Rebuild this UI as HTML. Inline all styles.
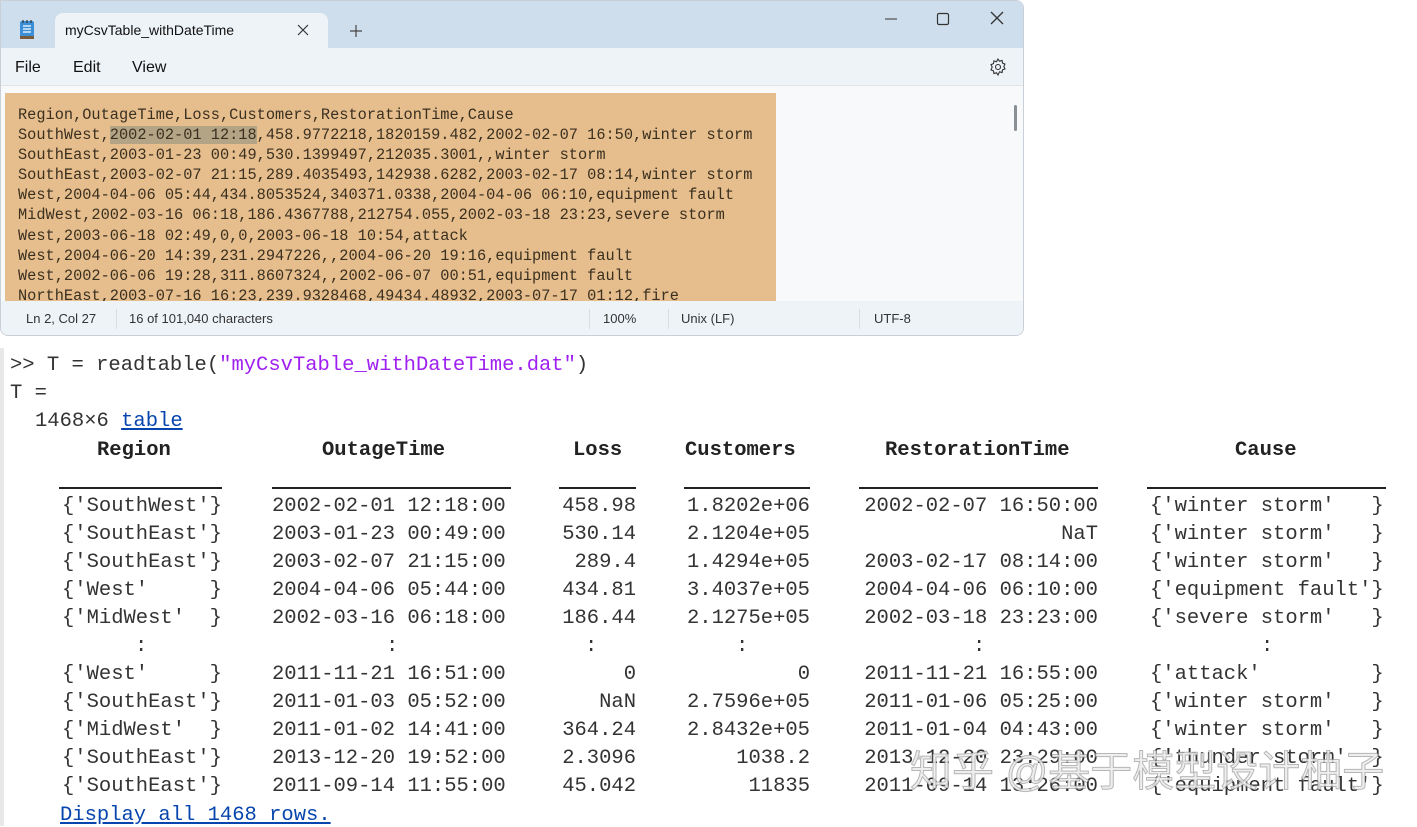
<!DOCTYPE html>
<html><head><meta charset="utf-8">
<style>
*{margin:0;padding:0;box-sizing:border-box}
body{width:1417px;height:826px;background:#fff;position:relative;overflow:hidden;font-family:"Liberation Sans",sans-serif}
.a{position:absolute;white-space:pre}
#win{position:absolute;left:0;top:0;width:1024px;height:336px;border:1px solid #c9cfd6;border-radius:0 8px 8px 8px;overflow:hidden;background:#f7f9fb}
#title{position:absolute;left:0;top:0;width:100%;height:47px;background:#cfdeec}
#tab{position:absolute;left:54px;top:12px;width:273px;height:36px;background:#eef3f8;border-radius:8px 8px 0 0}
#menu{position:absolute;left:0;top:47px;width:100%;height:38px;background:#eef3f8;border-bottom:1px solid #e0e5ea}
#sel{position:absolute;left:4px;top:92px;width:771px;height:215px;background:#e6bd8c;overflow:hidden}
#sel div{font-family:"Liberation Mono",monospace;font-size:15.3px;line-height:20.1px;color:#3a3020;white-space:pre;padding-left:13px;padding-top:12px}
.hl{background:#b3a485}
#status{position:absolute;left:0;top:300px;width:100%;height:36px;background:#eef3f8;font-size:13px;color:#333}
.sep{position:absolute;top:8px;width:1px;height:20px;background:#d9dde2}
.m{font-family:"Liberation Mono","Courier New",monospace;font-size:20.5px;color:#333}
.r{text-align:right}
.h{font-weight:bold;color:#222}
.ln{position:absolute;top:487px;height:1.5px;background:#222}
</style></head><body>
<div id="win">
 <div id="title"></div>
 <div id="tab"></div>
 <svg class="a" style="left:17px;top:18px" width="18" height="22" viewBox="0 0 18 22"><rect x="2" y="2" width="14" height="18" rx="2" fill="#3b8fd6"/><rect x="2" y="17" width="14" height="3" fill="#7a5a3a"/><path d="M5 7h8M5 10h8M5 13h8" stroke="#fff" stroke-width="1.3"/><path d="M5 1v3M9 1v3M13 1v3" stroke="#333" stroke-width="1.2"/></svg>
 <div class="a" style="left:64px;top:21px;font-size:14px;color:#111">myCsvTable_withDateTime</div>
 <svg class="a" style="left:296px;top:23px" width="12" height="12"><path d="M1 1L11 11M11 1L1 11" stroke="#333" stroke-width="1.2"/></svg>
 <svg class="a" style="left:348px;top:23px" width="14" height="14"><path d="M7 1V13M1 7H13" stroke="#444" stroke-width="1.2"/></svg>
 <svg class="a" style="left:884px;top:17px" width="12" height="2"><path d="M0 1H12" stroke="#333"/></svg>
 <svg class="a" style="left:935px;top:11px" width="14" height="14"><rect x="1.5" y="1.5" width="11" height="11" rx="1.5" fill="none" stroke="#333" stroke-width="1.2"/></svg>
 <svg class="a" style="left:989px;top:10px" width="14" height="14"><path d="M1 1L13 13M13 1L1 13" stroke="#333" stroke-width="1.3"/></svg>
 <div id="menu"></div>
 <div class="a" style="left:14px;top:58px;font-size:16px;color:#111">File</div>
 <div class="a" style="left:72px;top:58px;font-size:16px;color:#111">Edit</div>
 <div class="a" style="left:131px;top:58px;font-size:16px;color:#111">View</div>
 <svg class="a" style="left:987px;top:56px" width="20" height="20" viewBox="0 0 20 20"><path d="M10 2l1.5 2.2 2.6-.7.4 2.6 2.5 1-1.2 2.4 1.2 2.4-2.5 1-.4 2.6-2.6-.7L10 18l-1.5-2.2-2.6.7-.4-2.6-2.5-1L4.2 10 3 7.6l2.5-1 .4-2.6 2.6.7z" fill="none" stroke="#333" stroke-width="1.1"/><circle cx="10" cy="10" r="2.5" fill="none" stroke="#333" stroke-width="1.1"/></svg>
 <div class="a" style="left:1013px;top:104px;width:3px;height:26px;background:#8a8f94;border-radius:2px"></div>
 <div id="sel"><div>Region,OutageTime,Loss,Customers,RestorationTime,Cause
SouthWest,<span class="hl">2002-02-01 12:18</span>,458.9772218,1820159.482,2002-02-07 16:50,winter storm
SouthEast,2003-01-23 00:49,530.1399497,212035.3001,,winter storm
SouthEast,2003-02-07 21:15,289.4035493,142938.6282,2003-02-17 08:14,winter storm
West,2004-04-06 05:44,434.8053524,340371.0338,2004-04-06 06:10,equipment fault
MidWest,2002-03-16 06:18,186.4367788,212754.055,2002-03-18 23:23,severe storm
West,2003-06-18 02:49,0,0,2003-06-18 10:54,attack
West,2004-06-20 14:39,231.2947226,,2004-06-20 19:16,equipment fault
West,2002-06-06 19:28,311.8607324,,2002-06-07 00:51,equipment fault
NorthEast,2003-07-16 16:23,239.9328468,49434.48932,2003-07-17 01:12,fire</div></div>
 <div id="status">
  <div class="a" style="left:25px;top:10px">Ln 2, Col 27</div>
  <div class="sep" style="left:115px"></div>
  <div class="a" style="left:128px;top:10px">16 of 101,040 characters</div>
  <div class="sep" style="left:588px"></div>
  <div class="a" style="left:602px;top:10px">100%</div>
  <div class="sep" style="left:667px"></div>
  <div class="a" style="left:680px;top:10px">Unix (LF)</div>
  <div class="sep" style="left:858px"></div>
  <div class="a" style="left:873px;top:10px">UTF-8</div>
 </div>
</div>
<div class="a" style="left:0;top:348px;width:4px;height:478px;background:#e8e8e8"></div>

<div class="a m" style="left:10px;top:354px">&gt;&gt; T = readtable(<span style="color:#a020f0">"myCsvTable_withDateTime.dat"</span>)</div>
<div class="a m" style="left:10px;top:382px">T =</div>
<div class="a m" style="left:35px;top:410px">1468×6 <span style="color:#0645ad;text-decoration:underline">table</span></div>

<div class="a m h" style="left:97px;top:439px">Region</div>
<div class="a m h" style="left:322px;top:439px">OutageTime</div>
<div class="a m h" style="left:573px;top:439px">Loss</div>
<div class="a m h" style="left:685px;top:439px">Customers</div>
<div class="a m h" style="left:885px;top:439px">RestorationTime</div>
<div class="a m h" style="left:1235px;top:439px">Cause</div>
<div class="ln" style="left:59px;width:163px"></div>
<div class="ln" style="left:272px;width:239px"></div>
<div class="ln" style="left:559px;width:77px"></div>
<div class="ln" style="left:684px;width:126px"></div>
<div class="ln" style="left:859px;width:239px"></div>
<div class="ln" style="left:1147px;width:239px"></div>

<div id="rows"></div>
<script>
var rows=[
["{'SouthWest'}","2002-02-01 12:18:00","458.98","1.8202e+06","2002-02-07 16:50:00","{'winter storm'   }"],
["{'SouthEast'}","2003-01-23 00:49:00","530.14","2.1204e+05","NaT","{'winter storm'   }"],
["{'SouthEast'}","2003-02-07 21:15:00","289.4","1.4294e+05","2003-02-17 08:14:00","{'winter storm'   }"],
["{'West'     }","2004-04-06 05:44:00","434.81","3.4037e+05","2004-04-06 06:10:00","{'equipment fault'}"],
["{'MidWest'  }","2002-03-16 06:18:00","186.44","2.1275e+05","2002-03-18 23:23:00","{'severe storm'   }"],
[":",":",":",":",":",":"],
["{'West'     }","2011-11-21 16:51:00","0","0","2011-11-21 16:55:00","{'attack'         }"],
["{'SouthEast'}","2011-01-03 05:52:00","NaN","2.7596e+05","2011-01-06 05:25:00","{'winter storm'   }"],
["{'MidWest'  }","2011-01-02 14:41:00","364.24","2.8432e+05","2011-01-04 04:43:00","{'winter storm'   }"],
["{'SouthEast'}","2013-12-20 19:52:00","2.3096","1038.2","2013-12-20 23:29:00","{'thunder storm'  }"],
["{'SouthEast'}","2011-09-14 11:55:00","45.042","11835","2011-09-14 13:26:00","{'equipment fault'}"]];
var h="";
rows.forEach(function(r,i){var y=495+i*28;
 if(r[0]==":"){[141,392,591,742,979,1267].forEach(function(x){h+='<div class="a m" style="left:'+(x-6)+'px;top:'+y+'px">:</div>';});return;}
 h+='<div class="a m" style="left:62px;top:'+y+'px">'+r[0]+'</div>';
 h+='<div class="a m" style="left:272px;top:'+y+'px">'+r[1]+'</div>';
 h+='<div class="a m r" style="left:500px;width:136px;top:'+y+'px">'+r[2]+'</div>';
 h+='<div class="a m r" style="left:660px;width:150px;top:'+y+'px">'+r[3]+'</div>';
 h+='<div class="a m r" style="left:850px;width:248px;top:'+y+'px">'+r[4]+'</div>';
 h+='<div class="a m" style="left:1150px;top:'+y+'px">'+r[5]+'</div>';
});
document.getElementById("rows").innerHTML=h;
</script>
<div class="a m" style="left:60px;top:804px;color:#0645ad;text-decoration:underline">Display all 1468 rows.</div>
<div class="a" style="left:910px;top:738px;font-family:'Liberation Sans','Noto Sans CJK SC',sans-serif;font-size:42px;color:rgba(235,235,235,0.85);-webkit-text-stroke:1px rgba(120,120,120,0.5)">知乎 @基于模型设计柚子</div>
</body></html>
